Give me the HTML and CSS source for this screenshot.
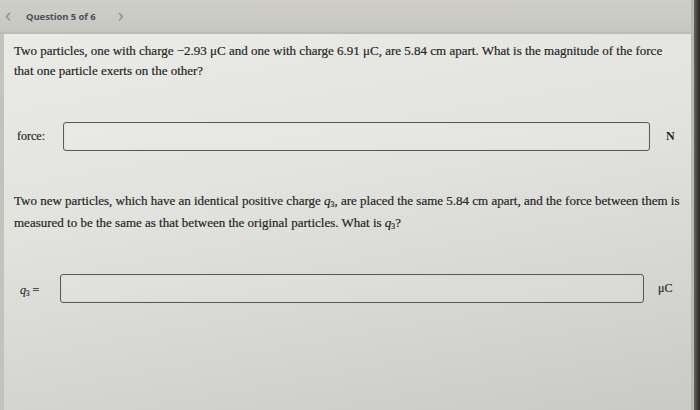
FILE: index.html
```html
<!DOCTYPE html>
<html>
<head>
<meta charset="utf-8">
<link rel="stylesheet" href="styles.css">
</head>
<body>
<div class="frame">
  <div class="screen">
    <div class="header">
      <span class="chev">&lsaquo;</span>
      <span class="title">Question 5 of 6</span>
      <span class="chev next">&rsaquo;</span>
    </div>
    <div class="content">
      <p class="para para1">Two particles, one with charge −2.93 μC and one with charge 6.91 μC, are 5.84 cm apart. What is the magnitude of the force that one particle exerts on the other?</p>
      <div class="row row-force">
        <span class="label">force:</span>
        <div class="box"></div>
        <span class="unit">N</span>
      </div>
      <p class="para para2">Two new particles, which have an identical positive charge <span class="var">q<sub>3</sub></span>, are placed the same 5.84 cm apart, and the force between them is measured to be the same as that between the original particles. What is <span class="var">q<sub>3</sub></span>?</p>
      <div class="row row-q">
        <span class="label label-q"><span class="var">q<sub>3</sub></span> =</span>
        <div class="box"></div>
        <span class="unit unit-q">μC</span>
      </div>
    </div>
  </div>
  <div class="bezel"></div>
</div>
</body>
</html>
```
FILE: styles.css
```css
html, body {
  margin: 0;
  padding: 0;
}
body {
  width: 700px;
  height: 410px;
  overflow: hidden;
  background: #cfcfca;
}
.frame {
  display: flex;
  width: 700px;
  height: 410px;
}
.screen {
  flex: 1;
  display: flex;
  flex-direction: column;
  border-right: 3px solid #b9b9b3;
}
.bezel {
  width: 6px;
  background: linear-gradient(90deg, #6b645c, #2b2622);
}
.header {
  height: 32px;
  flex: none;
  display: flex;
  align-items: center;
  background: linear-gradient(180deg, #cfcec8, #c7c7c1);
  border-bottom: 2px solid #bcbcb6;
  font-family: "Open Sans", "DejaVu Sans", sans-serif;
  color: #5a5d62;
}
.chev {
  font-size: 20px;
  color: #8a8d90;
  margin-left: 5px;
  line-height: 1;
  margin-top: -3px;
}
.chev.next {
  margin-left: 22px;
}
.title {
  font-size: 9.5px;
  font-weight: 700;
  margin-left: 15px;
  color: #4c5158;
  letter-spacing: -0.1px;
}
.content {
  flex: 1;
  border-left: 4px solid #c2c3bd;
  background: linear-gradient(170deg, #eaebe7 0%, #e2e3df 40%, #d4d5d0 75%, #c9cac5 100%);
  padding: 7px 6px 0 10px;
  font-family: "Liberation Serif", "Times New Roman", serif;
  color: #262626;
}
.para {
  margin: 0;
  font-size: 13px;
  line-height: 20px;
  -webkit-text-stroke: 0.2px #262626;
}
.para1 {
  padding-right: 14px;
}
.var {
  font-style: italic;
}
.var sub {
  font-style: normal;
  font-size: 0.6em;
  vertical-align: baseline;
  position: relative;
  top: 2px;
}
.row {
  display: flex;
  align-items: center;
}
.row-force {
  margin-top: 40px;
  height: 30px;
}
.row-q {
  margin-top: 38px;
  height: 30px;
}
.label {
  font-size: 12px;
  width: 46px;
  padding-left: 3px;
  -webkit-text-stroke: 0.2px #262626;
}
.label-q {
  width: 40px;
  padding-left: 6px;
  padding-top: 4px;
  color: #3a3a3a;
}
.box {
  width: 585px;
  height: 27px;
  border: 1.5px solid #5a5a58;
  border-radius: 3px;
  background: rgba(255, 255, 255, 0.12);
  box-shadow: inset 0 0 1px rgba(0,0,0,0.2);
}
.row-q .box {
  width: 582px;
}
.unit {
  font-size: 12px;
  font-weight: 700;
  margin-left: 16px;
}
.unit-q {
  font-weight: 400;
  margin-left: 14px;
  -webkit-text-stroke: 0.2px #262626;
}
.para2 {
  margin-top: 40px;
}
```
